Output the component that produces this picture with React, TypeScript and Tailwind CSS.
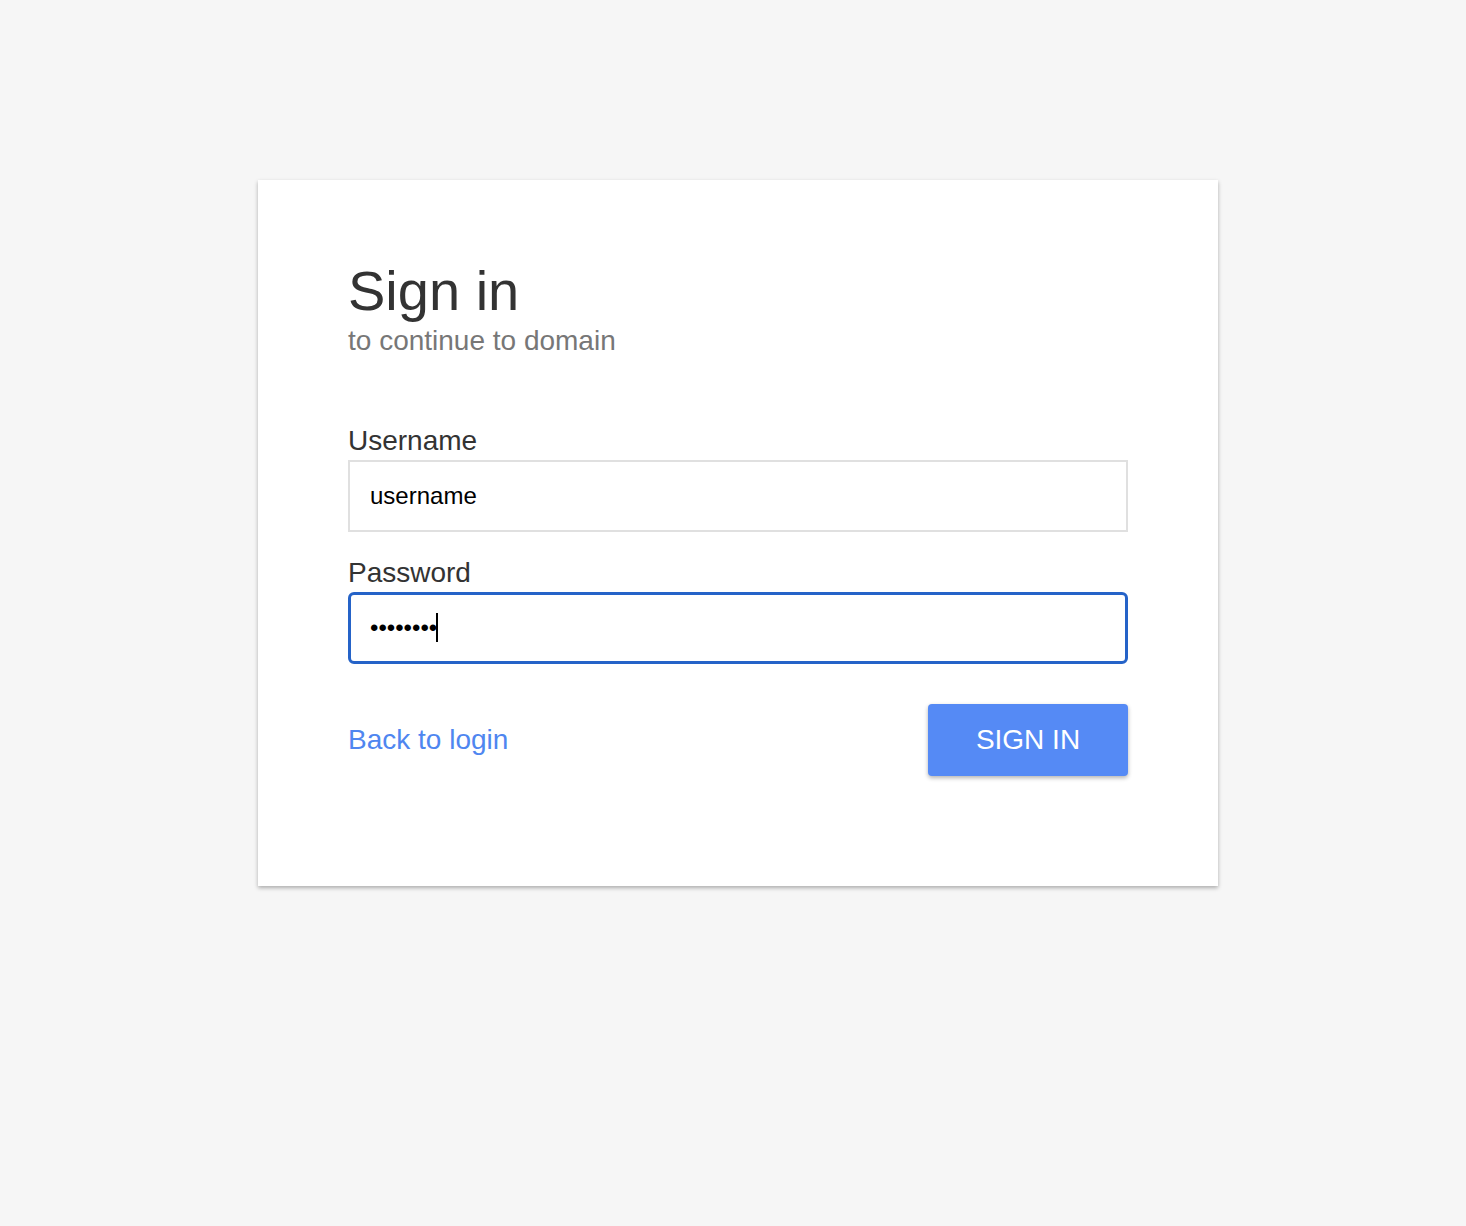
import React from 'react';

const App = () => {
  return (
    <div className="min-h-screen bg-[#f6f6f6] flex justify-center pl-[10px] pt-[180px] font-['Liberation_Sans',Arial,sans-serif]">
      <div className="w-[960px] h-[706px] bg-white shadow-[0_2px_4px_rgba(0,0,0,0.3)] px-[90px] pt-[83px]">
        <h1 className="text-[56px] leading-[56px] text-[#333333]">Sign in</h1>
        <p className="mt-[8px] text-[28px] leading-[28px] text-[#777777]">to continue to domain</p>

        <form className="mt-[72px]" onSubmit={(e) => e.preventDefault()}>
          <label htmlFor="username" className="block text-[28px] leading-[28px] text-[#333333]">
            Username
          </label>
          <input
            id="username"
            type="text"
            defaultValue="username"
            className="mt-[5px] block w-full h-[72px] border-2 border-[#e0e0e0] px-[20px] text-[24px] text-black outline-none"
          />

          <label htmlFor="password" className="mt-[27px] block text-[28px] leading-[28px] text-[#333333]">
            Password
          </label>
          <div className="relative mt-[5px]">
            <input
              id="password"
              type="password"
              defaultValue="password"
              className="block w-full h-[72px] border-[3px] border-[#2563c8] rounded-[6px] px-[19px] text-[24px] text-black outline-none"
            />
            {/* static text caret, as in the screenshot */}
            <span className="absolute left-[88px] top-[21px] w-[2px] h-[29px] bg-black" />
          </div>

          <div className="mt-[40px] flex items-center justify-between">
            <a href="#" className="text-[28px] text-[#4f86f0]">
              Back to login
            </a>
            <button
              type="submit"
              className="w-[200px] h-[72px] rounded-[4px] bg-[#558af5] text-white text-[28px] shadow-[0_2px_4px_rgba(0,0,0,0.3)]"
            >
              SIGN IN
            </button>
          </div>
        </form>
      </div>
    </div>
  );
};

export default App;
